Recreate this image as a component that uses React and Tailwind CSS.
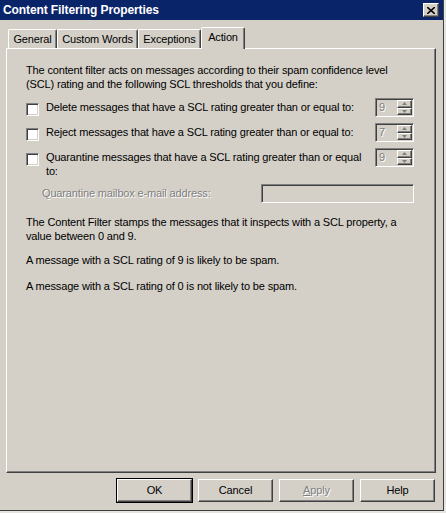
import React from "react";

const raised =
  "border border-t-white border-l-white border-b-[#404040] border-r-[#404040] shadow-[inset_-1px_-1px_#808080]";
const sunken =
  "border border-t-[#808080] border-l-[#808080] border-b-white border-r-white shadow-[inset_1px_1px_#404040,inset_-1px_-1px_#d4d0c8]";
const disabledText = "text-[#808080] [text-shadow:1px_1px_0_#ffffff]";

const tabs = [
  { label: "General", w: "w-[49px]" },
  { label: "Custom Words", w: "w-[81px]" },
  { label: "Exceptions", w: "w-[63px]" },
];

const Checkbox = () => <div className={`w-[13px] h-[13px] shrink-0 bg-white ${sunken}`} />;

const Arrow = ({ up }) => (
  <svg width="5" height="3" viewBox="0 0 5 3" className="block">
    {up ? <path d="M2.5 0 L5 3 L0 3 Z" fill="#808080" /> : <path d="M0 0 L5 0 L2.5 3 Z" fill="#808080" />}
  </svg>
);

const Spinner = ({ value }) => (
  <div className={`w-[39px] h-[19px] shrink-0 flex bg-[#d4d0c8] ${sunken}`}>
    <div className={`flex-1 pl-[3px] pt-[1px] leading-[14px] ${disabledText}`}>{value}</div>
    <div className="w-[15px] flex flex-col mt-[1px] mr-[1px] mb-[1px]">
      <div className={`flex-1 flex items-center justify-center bg-[#d4d0c8] ${raised}`}>
        <Arrow up />
      </div>
      <div className={`flex-1 flex items-center justify-center bg-[#d4d0c8] ${raised}`}>
        <Arrow />
      </div>
    </div>
  </div>
);

const Row = ({ children, value }) => (
  <div className="flex items-start min-h-[25px]">
    <div className="mt-[5px]">
      <Checkbox />
    </div>
    <div className="flex-1 ml-[7px] mt-[2px] leading-[14px]">{children}</div>
    <Spinner value={value} />
  </div>
);

const Button = ({ children, isDefault, disabled }) => (
  <div
    className={`w-[75px] h-[23px] flex items-center justify-center bg-[#d4d0c8] ${
      isDefault ? "outline outline-1 outline-black" : ""
    } ${raised} ${disabled ? disabledText : "text-black"}`}
  >
    {children}
  </div>
);

export default function App() {
  return (
    <div className="w-[446px] h-[513px] bg-[#e6e4e0] font-['Liberation_Sans',Arial,sans-serif] text-[11px] tracking-[-0.15px] text-black overflow-hidden">
      <div className="w-[444px] h-[511px] bg-[#d4d0c8] border-r border-b border-[#404040] flex flex-col">
        {/* title bar */}
        <div className="h-[20px] bg-[#0a246a] flex items-center justify-between pl-[3px] pr-[4px]">
          <span className="text-white font-bold text-[12px] tracking-[-0.1px]">Content Filtering Properties</span>
          <div className={`w-[16px] h-[14px] bg-[#d4d0c8] flex items-center justify-center ${raised}`}>
            <svg width="8" height="7" viewBox="0 0 8 7">
              <path d="M0 0 L8 7 M8 0 L0 7" stroke="#000" strokeWidth="1.6" />
            </svg>
          </div>
        </div>

        {/* tabs */}
        <div className="flex items-end h-[21px] mt-[7px] ml-[8px] relative z-10">
          {tabs.map((t) => (
            <div
              key={t.label}
              className={`${t.w} h-[19px] flex items-center justify-center border-t border-l border-t-white border-l-white border-r border-r-[#404040] shadow-[inset_-1px_0_#808080] rounded-tl-[2px] rounded-tr-[2px]`}
            >
              {t.label}
            </div>
          ))}
          <div className="w-[44px] h-[22px] -mb-[1px] pb-[2px] flex items-center justify-center bg-[#d4d0c8] border-t border-l border-t-white border-l-white border-r border-r-[#404040] shadow-[inset_-1px_0_#808080] rounded-tl-[2px] rounded-tr-[2px]">
            Action
          </div>
        </div>

        {/* panel */}
        <div className={`ml-[6px] w-[430px] h-[425px] ${raised} pl-[19px] pr-[21px] pt-[14px]`}>
          <p className="leading-[14px]">
            The content filter acts on messages according to their spam confidence level
            <br />
            (SCL) rating and the following SCL thresholds that you define:
          </p>

          <div className="mt-[7px]">
            <Row value="9">Delete messages that have a SCL rating greater than or equal to:</Row>
            <Row value="7">Reject messages that have a SCL rating greater than or equal to:</Row>
            <Row value="9">
              Quarantine messages that have a SCL rating greater than or equal
              <br />
              to:
            </Row>
          </div>

          <div className="flex items-center mt-[6px] pl-[16px]">
            <span className={`flex-1 ${disabledText}`}>Quarantine mailbox e-mail address:</span>
            <div className={`w-[153px] h-[19px] bg-[#d4d0c8] ${sunken}`} />
          </div>

          <p className="leading-[14px] mt-[12px]">
            The Content Filter stamps the messages that it inspects with a SCL property, a
            <br />
            value between 0 and 9.
          </p>
          <p className="leading-[14px] mt-[10px]">A message with a SCL rating of 9 is likely to be spam.</p>
          <p className="leading-[14px] mt-[12px]">A message with a SCL rating of 0 is not likely to be spam.</p>
        </div>

        {/* buttons */}
        <div className="flex justify-end gap-[6px] mt-[6px] mr-[8px]">
          <Button isDefault>OK</Button>
          <Button>Cancel</Button>
          <Button disabled>
            <span>
              <span className="underline">A</span>pply
            </span>
          </Button>
          <Button>Help</Button>
        </div>
      </div>
    </div>
  );
}
